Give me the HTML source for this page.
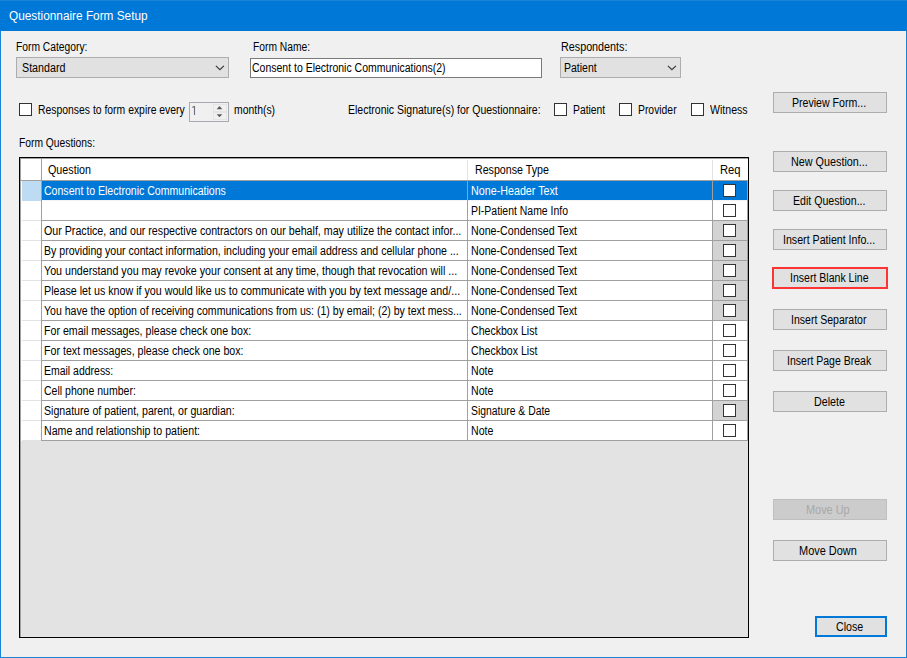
<!DOCTYPE html>
<html><head><meta charset="utf-8">
<style>
*{margin:0;padding:0;box-sizing:border-box}
html,body{width:907px;height:658px;overflow:hidden;background:#f0f0f0}
body{position:relative;font-family:"Liberation Sans",sans-serif;font-size:12px;color:#000}
.a{position:absolute}
.t{position:absolute;white-space:pre;line-height:13px;font-size:12px;transform-origin:0 0}
#title{position:absolute;left:0;top:0;width:907px;height:31px;background:#0078d7;border-top:1px solid #1a84d8}
#title .tt{position:absolute;left:9px;top:8px;font-size:12px;line-height:15px;color:#fff;white-space:pre;transform:scaleX(0.985);transform-origin:0 0}
.combo{position:absolute;height:21px;border:1px solid #adadad;background:#e1e1e1}
.combo svg{position:absolute;top:6px}
.tb{position:absolute;height:20px;border:1px solid #7a7a7a;background:#fff}
.cb{position:absolute;width:13px;height:13px;border:1px solid #333;background:#fff}
.btn{position:absolute;left:773px;width:114px;height:21px;border:1px solid #adadad;background:#e1e1e1}
</style></head><body>
<div class="a" style="left:0;top:0;width:1px;height:658px;background:#1883d7"></div>
<div class="a" style="left:906px;top:0;width:1px;height:658px;background:#1883d7"></div>
<div class="a" style="left:0;top:657px;width:907px;height:1px;background:#1883d7"></div>
<div id="title"><div class="tt">Questionnaire Form Setup</div></div>
<div class="combo" style="left:16px;top:57px;width:213px"><svg style="left:198px" width="10" height="8" viewBox="0 0 10 8"><path d="M0.9 1.9 L4.9 5.6 L8.9 1.9" fill="none" stroke="#3a3a3a" stroke-width="1.25"/></svg></div>
<div class="tb" style="left:250px;top:58px;width:292px"></div>
<div class="combo" style="left:560px;top:57px;width:121px"><svg style="left:106px" width="10" height="8" viewBox="0 0 10 8"><path d="M0.9 1.9 L4.9 5.6 L8.9 1.9" fill="none" stroke="#3a3a3a" stroke-width="1.25"/></svg></div>
<div class="cb" style="left:19px;top:103px"></div>
<svg class="a" style="left:188px;top:101px" width="42" height="22" viewBox="0 0 42 22">
 <rect x="1.5" y="1.5" width="39" height="19" fill="#f0f0f0" stroke="#a9a9b1" stroke-width="1"/>
 <path d="M6.5 5 L6.5 14" stroke="#6e6e80" stroke-width="1.1" fill="none"/>
 <path d="M4.4 6.6 L6.6 5.3" stroke="#7a6a70" stroke-width="1.2" fill="none"/>
 <rect x="25" y="3" width="14" height="16" fill="#e4e4e4"/>
 <rect x="26" y="4" width="12" height="6" fill="#f0f0f0"/>
 <rect x="26" y="12" width="12" height="6" fill="#f0f0f0"/>
 <path d="M28.7 8.2 L34.3 8.2 L31.5 5 Z" fill="#5a5a5a"/>
 <path d="M28.7 13.2 L34.3 13.2 L31.5 16.2 Z" fill="#5a5a5a"/>
</svg>
<div class="cb" style="left:554px;top:103px"></div>
<div class="cb" style="left:619px;top:103px"></div>
<div class="cb" style="left:691px;top:103px"></div>
<div class="btn" style="top:92px;"></div>
<div class="a" style="left:19px;top:157px;width:730px;height:481px;border:1px solid #000;background:#e3e3e3"></div>
<div class="a" style="left:20px;top:158px;width:728px;height:22px;background:#fff"></div>
<div class="a" style="left:20px;top:158px;width:728px;height:1px;background:#a0a0a0"></div>
<div class="a" style="left:21px;top:180px;width:727px;height:1px;background:#a0a0a0"></div>
<div class="a" style="left:41px;top:158px;width:1px;height:22px;background:#a0a0a0"></div>
<div class="a" style="left:467px;top:160px;width:1px;height:20px;background:#e3e3e3"></div>
<div class="a" style="left:712px;top:160px;width:1px;height:20px;background:#e3e3e3"></div>
<div class="a" style="left:20px;top:181px;width:21px;height:20px;background:#fff"></div>
<div class="a" style="left:22px;top:181px;width:19px;height:20px;background:#bddcf3"></div>
<div class="a" style="left:42px;top:181px;width:706px;height:19px;background:#0078d7"></div>
<div class="a" style="left:42px;top:200px;width:706px;height:1px;background:#f3f3f3"></div>
<div class="a" style="left:41px;top:181px;width:1px;height:20px;background:#a0a0a0"></div>
<div class="a" style="left:467px;top:181px;width:1px;height:20px;background:#a0a0a0"></div>
<div class="a" style="left:712px;top:181px;width:1px;height:20px;background:#a0a0a0"></div>
<div class="a" style="left:747px;top:181px;width:1px;height:20px;background:#a0a0a0"></div>
<div class="cb" style="left:723px;top:184px"></div>
<div class="a" style="left:20px;top:201px;width:21px;height:20px;background:#fff"></div>
<div class="a" style="left:22px;top:220px;width:19px;height:1px;background:#e3e3e3"></div>
<div class="a" style="left:42px;top:201px;width:706px;height:19px;background:#fff"></div>
<div class="a" style="left:42px;top:220px;width:706px;height:1px;background:#a0a0a0"></div>
<div class="a" style="left:41px;top:201px;width:1px;height:20px;background:#a0a0a0"></div>
<div class="a" style="left:467px;top:201px;width:1px;height:20px;background:#a0a0a0"></div>
<div class="a" style="left:712px;top:201px;width:1px;height:20px;background:#a0a0a0"></div>
<div class="a" style="left:747px;top:201px;width:1px;height:20px;background:#a0a0a0"></div>
<div class="cb" style="left:723px;top:204px"></div>
<div class="a" style="left:20px;top:221px;width:21px;height:20px;background:#fff"></div>
<div class="a" style="left:22px;top:240px;width:19px;height:1px;background:#e3e3e3"></div>
<div class="a" style="left:42px;top:221px;width:706px;height:19px;background:#fff"></div>
<div class="a" style="left:42px;top:240px;width:706px;height:1px;background:#a0a0a0"></div>
<div class="a" style="left:713px;top:221px;width:34px;height:19px;background:#d3d3d3"></div>
<div class="a" style="left:41px;top:221px;width:1px;height:20px;background:#a0a0a0"></div>
<div class="a" style="left:467px;top:221px;width:1px;height:20px;background:#a0a0a0"></div>
<div class="a" style="left:712px;top:221px;width:1px;height:20px;background:#a0a0a0"></div>
<div class="a" style="left:747px;top:221px;width:1px;height:20px;background:#a0a0a0"></div>
<div class="cb" style="left:723px;top:224px"></div>
<div class="a" style="left:20px;top:241px;width:21px;height:20px;background:#fff"></div>
<div class="a" style="left:22px;top:260px;width:19px;height:1px;background:#e3e3e3"></div>
<div class="a" style="left:42px;top:241px;width:706px;height:19px;background:#fff"></div>
<div class="a" style="left:42px;top:260px;width:706px;height:1px;background:#a0a0a0"></div>
<div class="a" style="left:713px;top:241px;width:34px;height:19px;background:#d3d3d3"></div>
<div class="a" style="left:41px;top:241px;width:1px;height:20px;background:#a0a0a0"></div>
<div class="a" style="left:467px;top:241px;width:1px;height:20px;background:#a0a0a0"></div>
<div class="a" style="left:712px;top:241px;width:1px;height:20px;background:#a0a0a0"></div>
<div class="a" style="left:747px;top:241px;width:1px;height:20px;background:#a0a0a0"></div>
<div class="cb" style="left:723px;top:244px"></div>
<div class="a" style="left:20px;top:261px;width:21px;height:20px;background:#fff"></div>
<div class="a" style="left:22px;top:280px;width:19px;height:1px;background:#e3e3e3"></div>
<div class="a" style="left:42px;top:261px;width:706px;height:19px;background:#fff"></div>
<div class="a" style="left:42px;top:280px;width:706px;height:1px;background:#a0a0a0"></div>
<div class="a" style="left:713px;top:261px;width:34px;height:19px;background:#d3d3d3"></div>
<div class="a" style="left:41px;top:261px;width:1px;height:20px;background:#a0a0a0"></div>
<div class="a" style="left:467px;top:261px;width:1px;height:20px;background:#a0a0a0"></div>
<div class="a" style="left:712px;top:261px;width:1px;height:20px;background:#a0a0a0"></div>
<div class="a" style="left:747px;top:261px;width:1px;height:20px;background:#a0a0a0"></div>
<div class="cb" style="left:723px;top:264px"></div>
<div class="a" style="left:20px;top:281px;width:21px;height:20px;background:#fff"></div>
<div class="a" style="left:22px;top:300px;width:19px;height:1px;background:#e3e3e3"></div>
<div class="a" style="left:42px;top:281px;width:706px;height:19px;background:#fff"></div>
<div class="a" style="left:42px;top:300px;width:706px;height:1px;background:#a0a0a0"></div>
<div class="a" style="left:713px;top:281px;width:34px;height:19px;background:#d3d3d3"></div>
<div class="a" style="left:41px;top:281px;width:1px;height:20px;background:#a0a0a0"></div>
<div class="a" style="left:467px;top:281px;width:1px;height:20px;background:#a0a0a0"></div>
<div class="a" style="left:712px;top:281px;width:1px;height:20px;background:#a0a0a0"></div>
<div class="a" style="left:747px;top:281px;width:1px;height:20px;background:#a0a0a0"></div>
<div class="cb" style="left:723px;top:284px"></div>
<div class="a" style="left:20px;top:301px;width:21px;height:20px;background:#fff"></div>
<div class="a" style="left:22px;top:320px;width:19px;height:1px;background:#e3e3e3"></div>
<div class="a" style="left:42px;top:301px;width:706px;height:19px;background:#fff"></div>
<div class="a" style="left:42px;top:320px;width:706px;height:1px;background:#a0a0a0"></div>
<div class="a" style="left:713px;top:301px;width:34px;height:19px;background:#d3d3d3"></div>
<div class="a" style="left:41px;top:301px;width:1px;height:20px;background:#a0a0a0"></div>
<div class="a" style="left:467px;top:301px;width:1px;height:20px;background:#a0a0a0"></div>
<div class="a" style="left:712px;top:301px;width:1px;height:20px;background:#a0a0a0"></div>
<div class="a" style="left:747px;top:301px;width:1px;height:20px;background:#a0a0a0"></div>
<div class="cb" style="left:723px;top:304px"></div>
<div class="a" style="left:20px;top:321px;width:21px;height:20px;background:#fff"></div>
<div class="a" style="left:22px;top:340px;width:19px;height:1px;background:#e3e3e3"></div>
<div class="a" style="left:42px;top:321px;width:706px;height:19px;background:#fff"></div>
<div class="a" style="left:42px;top:340px;width:706px;height:1px;background:#a0a0a0"></div>
<div class="a" style="left:41px;top:321px;width:1px;height:20px;background:#a0a0a0"></div>
<div class="a" style="left:467px;top:321px;width:1px;height:20px;background:#a0a0a0"></div>
<div class="a" style="left:712px;top:321px;width:1px;height:20px;background:#a0a0a0"></div>
<div class="a" style="left:747px;top:321px;width:1px;height:20px;background:#a0a0a0"></div>
<div class="cb" style="left:723px;top:324px"></div>
<div class="a" style="left:20px;top:341px;width:21px;height:20px;background:#fff"></div>
<div class="a" style="left:22px;top:360px;width:19px;height:1px;background:#e3e3e3"></div>
<div class="a" style="left:42px;top:341px;width:706px;height:19px;background:#fff"></div>
<div class="a" style="left:42px;top:360px;width:706px;height:1px;background:#a0a0a0"></div>
<div class="a" style="left:41px;top:341px;width:1px;height:20px;background:#a0a0a0"></div>
<div class="a" style="left:467px;top:341px;width:1px;height:20px;background:#a0a0a0"></div>
<div class="a" style="left:712px;top:341px;width:1px;height:20px;background:#a0a0a0"></div>
<div class="a" style="left:747px;top:341px;width:1px;height:20px;background:#a0a0a0"></div>
<div class="cb" style="left:723px;top:344px"></div>
<div class="a" style="left:20px;top:361px;width:21px;height:20px;background:#fff"></div>
<div class="a" style="left:22px;top:380px;width:19px;height:1px;background:#e3e3e3"></div>
<div class="a" style="left:42px;top:361px;width:706px;height:19px;background:#fff"></div>
<div class="a" style="left:42px;top:380px;width:706px;height:1px;background:#a0a0a0"></div>
<div class="a" style="left:41px;top:361px;width:1px;height:20px;background:#a0a0a0"></div>
<div class="a" style="left:467px;top:361px;width:1px;height:20px;background:#a0a0a0"></div>
<div class="a" style="left:712px;top:361px;width:1px;height:20px;background:#a0a0a0"></div>
<div class="a" style="left:747px;top:361px;width:1px;height:20px;background:#a0a0a0"></div>
<div class="cb" style="left:723px;top:364px"></div>
<div class="a" style="left:20px;top:381px;width:21px;height:20px;background:#fff"></div>
<div class="a" style="left:22px;top:400px;width:19px;height:1px;background:#e3e3e3"></div>
<div class="a" style="left:42px;top:381px;width:706px;height:19px;background:#fff"></div>
<div class="a" style="left:42px;top:400px;width:706px;height:1px;background:#a0a0a0"></div>
<div class="a" style="left:41px;top:381px;width:1px;height:20px;background:#a0a0a0"></div>
<div class="a" style="left:467px;top:381px;width:1px;height:20px;background:#a0a0a0"></div>
<div class="a" style="left:712px;top:381px;width:1px;height:20px;background:#a0a0a0"></div>
<div class="a" style="left:747px;top:381px;width:1px;height:20px;background:#a0a0a0"></div>
<div class="cb" style="left:723px;top:384px"></div>
<div class="a" style="left:20px;top:401px;width:21px;height:20px;background:#fff"></div>
<div class="a" style="left:22px;top:420px;width:19px;height:1px;background:#e3e3e3"></div>
<div class="a" style="left:42px;top:401px;width:706px;height:19px;background:#fff"></div>
<div class="a" style="left:42px;top:420px;width:706px;height:1px;background:#a0a0a0"></div>
<div class="a" style="left:713px;top:401px;width:34px;height:19px;background:#d3d3d3"></div>
<div class="a" style="left:41px;top:401px;width:1px;height:20px;background:#a0a0a0"></div>
<div class="a" style="left:467px;top:401px;width:1px;height:20px;background:#a0a0a0"></div>
<div class="a" style="left:712px;top:401px;width:1px;height:20px;background:#a0a0a0"></div>
<div class="a" style="left:747px;top:401px;width:1px;height:20px;background:#a0a0a0"></div>
<div class="cb" style="left:723px;top:404px"></div>
<div class="a" style="left:20px;top:421px;width:21px;height:20px;background:#fff"></div>
<div class="a" style="left:22px;top:440px;width:19px;height:1px;background:#e3e3e3"></div>
<div class="a" style="left:42px;top:421px;width:706px;height:19px;background:#fff"></div>
<div class="a" style="left:42px;top:440px;width:706px;height:1px;background:#a0a0a0"></div>
<div class="a" style="left:41px;top:421px;width:1px;height:20px;background:#a0a0a0"></div>
<div class="a" style="left:467px;top:421px;width:1px;height:20px;background:#a0a0a0"></div>
<div class="a" style="left:712px;top:421px;width:1px;height:20px;background:#a0a0a0"></div>
<div class="a" style="left:747px;top:421px;width:1px;height:20px;background:#a0a0a0"></div>
<div class="cb" style="left:723px;top:424px"></div>
<div class="a" style="left:20px;top:158px;width:1px;height:479px;background:#a0a0a0"></div>
<div class="btn" style="top:151px;"></div>
<div class="btn" style="top:190px;"></div>
<div class="btn" style="top:229px;"></div>
<div class="btn" style="top:267px;left:772px;width:116px;height:22px;border:2px solid #fd3434"></div>
<div class="btn" style="top:309px;"></div>
<div class="btn" style="top:350px;"></div>
<div class="btn" style="top:391px;"></div>
<div class="btn" style="top:499px;border-color:#bfbfbf;background:#cccccc"></div>
<div class="btn" style="top:540px;"></div>
<div class="btn" style="top:616px;left:815px;width:72px;border:2px solid #0078d7"></div>
<div class="t" style="left:16.14px;top:41px;transform:scaleX(0.8568);">Form Category:</div>
<div class="t" style="left:22.31px;top:62px;transform:scaleX(0.8915);">Standard</div>
<div class="t" style="left:252.64px;top:41px;transform:scaleX(0.8569);">Form Name:</div>
<div class="t" style="left:252.33px;top:62px;transform:scaleX(0.8741);">Consent to Electronic Communications(2)</div>
<div class="t" style="left:560.50px;top:41px;transform:scaleX(0.8972);">Respondents:</div>
<div class="t" style="left:563.62px;top:62px;transform:scaleX(0.8750);">Patient</div>
<div class="t" style="left:37.73px;top:104px;transform:scaleX(0.8663);">Responses to form expire every</div>
<div class="t" style="left:233.63px;top:104px;transform:scaleX(0.8674);">month(s)</div>
<div class="t" style="left:347.93px;top:104px;transform:scaleX(0.8748);">Electronic Signature(s) for Questionnaire:</div>
<div class="t" style="left:572.84px;top:104px;transform:scaleX(0.8611);">Patient</div>
<div class="t" style="left:637.64px;top:104px;transform:scaleX(0.8636);">Provider</div>
<div class="t" style="left:710.00px;top:104px;transform:scaleX(0.8810);">Witness</div>
<div class="t" style="left:18.64px;top:137px;transform:scaleX(0.8575);">Form Questions:</div>
<div class="t" style="left:48.00px;top:164px;transform:scaleX(0.8957);">Question</div>
<div class="t" style="left:475.11px;top:164px;transform:scaleX(0.8878);">Response Type</div>
<div class="t" style="left:719.67px;top:164px;transform:scaleX(0.9350);">Req</div>
<div class="t" style="left:792.22px;top:97px;transform:scaleX(0.8817);">Preview Form...</div>
<div class="t" style="left:790.70px;top:156px;transform:scaleX(0.9000);">New Question...</div>
<div class="t" style="left:792.52px;top:195px;transform:scaleX(0.8838);">Edit Question...</div>
<div class="t" style="left:782.81px;top:234px;transform:scaleX(0.8863);">Insert Patient Info...</div>
<div class="t" style="left:789.72px;top:272px;transform:scaleX(0.8784);">Insert Blank Line</div>
<div class="t" style="left:791.22px;top:314px;transform:scaleX(0.8765);">Insert Separator</div>
<div class="t" style="left:786.62px;top:355px;transform:scaleX(0.8768);">Insert Page Break</div>
<div class="t" style="left:813.61px;top:396px;transform:scaleX(0.8939);">Delete</div>
<div class="t" style="left:806.29px;top:504px;transform:scaleX(0.9085);color:#a8a8a8">Move Up</div>
<div class="t" style="left:799.49px;top:545px;transform:scaleX(0.9129);">Move Down</div>
<div class="t" style="left:835.51px;top:621px;transform:scaleX(0.8897);">Close</div>
<div class="t" style="left:44.12px;top:185px;transform:scaleX(0.8795);color:#fff">Consent to Electronic Communications</div>
<div class="t" style="left:471.11px;top:185px;transform:scaleX(0.8937);color:#fff">None-Header Text</div>
<div class="t" style="left:471.13px;top:205px;transform:scaleX(0.8709);color:#000">PI-Patient Name Info</div>
<div class="t" style="left:44.11px;top:225px;transform:scaleX(0.8887);color:#000">Our Practice, and our respective contractors on our behalf, may utilize the contact infor...</div>
<div class="t" style="left:471.11px;top:225px;transform:scaleX(0.8890);color:#000">None-Condensed Text</div>
<div class="t" style="left:44.12px;top:245px;transform:scaleX(0.8806);color:#000">By providing your contact information, including your email address and cellular phone ...</div>
<div class="t" style="left:471.11px;top:245px;transform:scaleX(0.8890);color:#000">None-Condensed Text</div>
<div class="t" style="left:44.11px;top:265px;transform:scaleX(0.8896);color:#000">You understand you may revoke your consent at any time, though that revocation will ...</div>
<div class="t" style="left:471.11px;top:265px;transform:scaleX(0.8890);color:#000">None-Condensed Text</div>
<div class="t" style="left:44.11px;top:285px;transform:scaleX(0.8912);color:#000">Please let us know if you would like us to communicate with you by text message and/...</div>
<div class="t" style="left:471.11px;top:285px;transform:scaleX(0.8890);color:#000">None-Condensed Text</div>
<div class="t" style="left:44.12px;top:305px;transform:scaleX(0.8793);color:#000">You have the option of receiving communications from us: (1) by email; (2) by text mess...</div>
<div class="t" style="left:471.11px;top:305px;transform:scaleX(0.8890);color:#000">None-Condensed Text</div>
<div class="t" style="left:44.12px;top:325px;transform:scaleX(0.8849);color:#000">For email messages, please check one box:</div>
<div class="t" style="left:471.12px;top:325px;transform:scaleX(0.8811);color:#000">Checkbox List</div>
<div class="t" style="left:44.11px;top:345px;transform:scaleX(0.8879);color:#000">For text messages, please check one box:</div>
<div class="t" style="left:471.12px;top:345px;transform:scaleX(0.8811);color:#000">Checkbox List</div>
<div class="t" style="left:44.13px;top:365px;transform:scaleX(0.8727);color:#000">Email address:</div>
<div class="t" style="left:471.12px;top:365px;transform:scaleX(0.8833);color:#000">Note</div>
<div class="t" style="left:44.12px;top:385px;transform:scaleX(0.8767);color:#000">Cell phone number:</div>
<div class="t" style="left:471.12px;top:385px;transform:scaleX(0.8833);color:#000">Note</div>
<div class="t" style="left:44.11px;top:405px;transform:scaleX(0.8850);color:#000">Signature of patient, parent, or guardian:</div>
<div class="t" style="left:471.13px;top:405px;transform:scaleX(0.8656);color:#000">Signature &amp; Date</div>
<div class="t" style="left:44.11px;top:425px;transform:scaleX(0.8862);color:#000">Name and relationship to patient:</div>
<div class="t" style="left:471.12px;top:425px;transform:scaleX(0.8833);color:#000">Note</div>
</body></html>
